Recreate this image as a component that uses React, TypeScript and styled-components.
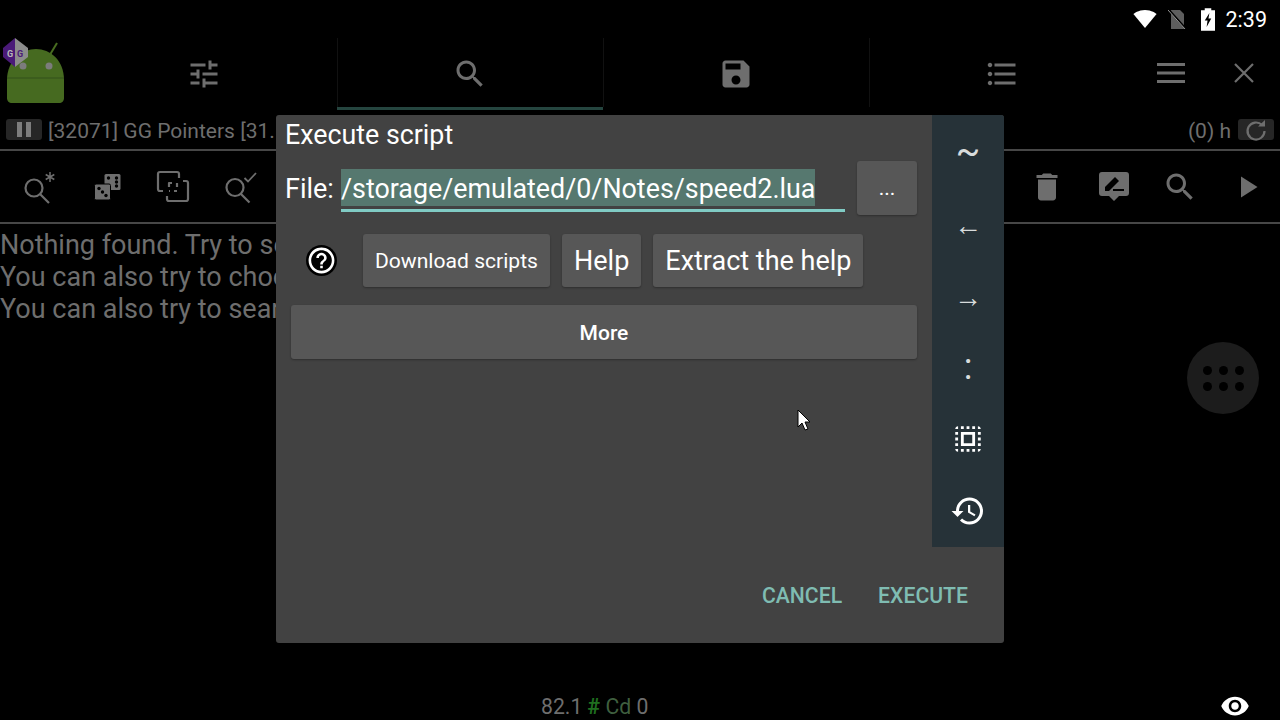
import React from 'react';
import styled, { createGlobalStyle } from 'styled-components';

const GlobalStyle = createGlobalStyle`
  html, body {
    background: #000;
    margin: 0;
    overflow: hidden;
    padding: 0;
  }
  * {
    box-sizing: border-box;
  }
`;

const Screen = styled.div`
  background: #000;
  color: #6e6e6e;
  display: flex;
  flex-direction: column;
  font-family: Roboto, "Liberation Sans", sans-serif;
  height: 720px;
  overflow: hidden;
  position: relative;
  width: 1280px;
`;

const StatusBar = styled.div`
  align-items: center;
  color: #fff;
  display: flex;
  font-size: 21.5px;
  height: 38px;
  justify-content: flex-end;
  padding-right: 13px;
`;
const StatusIcon = styled.svg<{ $gap: number }>`
  display: block;
  margin-right: ${(p) => p.$gap}px;
`;

const TabBar = styled.div`
  display: flex;
  height: 72px;
`;
const LogoCell = styled.div`
  width: 71px;
`;
const Tab = styled.div<{ $active?: boolean }>`
  align-items: center;
  border-bottom: 3px solid ${(p) => (p.$active ? '#25453f' : 'transparent')};
  display: flex;
  justify-content: center;
  padding-top: 2px;
  width: 266px;

  & + & {
    box-shadow: inset 1px 0 0 #111;
  }
`;
const TabAction = styled.div`
  align-items: center;
  display: flex;
  flex: 1;
  justify-content: center;
  padding-bottom: 2px;
`;

const ProcessRow = styled.div`
  align-items: center;
  border-bottom: 2px solid #474747;
  display: flex;
  font-size: 21px;
  height: 41px;
  justify-content: space-between;
  padding: 0 6px;
`;
const ProcessName = styled.div`
  align-items: center;
  display: flex;
  gap: 6px;
`;
const ProcessState = styled.div`
  align-items: center;
  display: flex;
  gap: 7px;
`;
const RowLabel = styled.span`
  padding-top: 3px;
`;
const SmallKey = styled.div`
  align-items: center;
  background: #262626;
  border-radius: 3px;
  display: flex;
  height: 21px;
  justify-content: center;
  width: 36px;
`;
const PauseBar = styled.span`
  background: #7d7d7d;
  display: block;
  height: 15px;
  margin: 0 2px;
  width: 5px;
`;

const ToolRow = styled.div`
  border-bottom: 2px solid #474747;
  display: flex;
  height: 73px;
  justify-content: space-between;
  padding-left: 7px;
`;
const ToolGroup = styled.div`
  display: flex;
`;
const ToolCell = styled.div`
  align-items: center;
  display: flex;
  justify-content: center;
  width: 66.5px;
`;

const Messages = styled.div`
  flex: 1;
  font-size: 27px;
  line-height: 32px;
  padding-top: 5px;
  white-space: nowrap;
`;

const BottomBar = styled.div`
  align-items: center;
  display: flex;
  font-size: 21.2px;
  height: 28px;
  justify-content: space-between;
  padding: 0 30px 0 541px;
`;
const BottomStats = styled.span`
  padding-top: 1px;
`;
const Hash = styled.span`
  color: #1f6e1f;
  font-weight: 700;
`;
const Cd = styled.span`
  color: #3f5f3f;
`;

const Fab = styled.div`
  align-content: center;
  background: #1c1c1c;
  border-radius: 50%;
  display: grid;
  gap: 7px;
  grid-template-columns: repeat(3, 9px);
  height: 72px;
  justify-content: center;
  left: 1187px;
  position: absolute;
  top: 342px;
  width: 72px;
`;
const FabDot = styled.span`
  background: #000;
  border-radius: 50%;
  height: 9px;
  width: 9px;
`;

const Dialog = styled.div`
  background: #424242;
  border-radius: 3px;
  color: #fff;
  display: flex;
  flex-direction: column;
  height: 528px;
  left: 276px;
  overflow: hidden;
  position: absolute;
  top: 115px;
  width: 728px;
`;
const DialogTop = styled.div`
  display: flex;
  height: 432px;
`;
const DialogBody = styled.div`
  flex: 1;
  padding: 0 15px 0 9px;
`;
const Title = styled.div`
  font-size: 26.8px;
  height: 46px;
  line-height: 40px;
`;
const FileRow = styled.div`
  align-items: flex-start;
  display: flex;
  height: 54px;
`;
const FileLabel = styled.span`
  font-size: 27px;
  line-height: 56px;
  width: 56px;
`;
const FileField = styled.div`
  border-bottom: 3px solid #80cbc4;
  height: 51px;
  padding-top: 8px;
  width: 504px;
`;
const FileValue = styled.span`
  background: #56786f;
  display: inline-block;
  font-size: 26.85px;
  height: 37px;
  line-height: 40px;
  white-space: nowrap;
`;
const RaisedButton = styled.div<{ $size?: number; $bold?: boolean }>`
  align-items: center;
  background: #575757;
  border-radius: 3px;
  box-shadow: 0 1px 2px rgba(0, 0, 0, 0.3);
  display: flex;
  font-size: ${(p) => p.$size ?? 27}px;
  font-weight: ${(p) => (p.$bold ? 500 : 400)};
  height: 53px;
  justify-content: center;
  padding: 0 12px;
  white-space: nowrap;
`;
const DotsButton = styled(RaisedButton)`
  height: 54px;
  margin-left: 12px;
  width: 60px;
`;
const ButtonRow = styled.div`
  align-items: center;
  display: flex;
  gap: 12px;
  margin-top: 19px;
`;
const HelpSlot = styled.div`
  align-items: center;
  display: flex;
  justify-content: center;
  margin-left: 6px;
  width: 60px;
`;
const HelpDisc = styled.div`
  background: #000;
  border-radius: 50%;
  height: 31px;
  width: 31px;
`;
const MoreButton = styled(RaisedButton)`
  height: 54px;
  margin-left: 6px;
  margin-top: 18px;
  padding-top: 1px;
`;
const SidePanel = styled.div`
  background: #263238;
  display: grid;
  grid-template-rows: repeat(6, 72px);
  width: 72px;
`;
const SideKey = styled.div<{ $size?: number; $drop?: number }>`
  align-items: center;
  color: #d8dcdc;
  display: flex;
  font-size: ${(p) => p.$size ?? 26}px;
  justify-content: center;
  padding-top: ${(p) => p.$drop ?? 0}px;
`;
const Footer = styled.div`
  align-items: center;
  display: flex;
  flex: 1;
  gap: 36px;
  justify-content: flex-end;
  padding: 0 36px 0 0;
`;
const FooterAction = styled.span`
  color: #7fbcb2;
  font-size: 21.2px;
  font-weight: 500;
`;
const Cursor = styled.svg`
  left: 796px;
  position: absolute;
  top: 409px;
`;

const P = {
  tune: 'M3 17v2h6v-2H3zM3 5v2h10V5H3zm10 16v-2h8v-2h-8v-2h-2v6h2zM7 9v2H3v2h4v2h2V9H7zm14 4v-2H11v2h10zm-6-4h2V7h4V5h-4V3h-2v6z',
  search: 'M15.5 14h-.79l-.28-.27C15.41 12.59 16 11.11 16 9.5 16 5.91 13.09 3 9.5 3S3 5.91 3 9.5 5.91 16 9.5 16c1.61 0 3.09-.59 4.23-1.57l.27.28v.79l5 4.99L20.49 19l-4.99-5zm-6 0C7.01 14 5 11.99 5 9.5S7.01 5 9.5 5 14 7.01 14 9.5 11.99 14 9.5 14z',
  save: 'M17 3H5c-1.11 0-2 .9-2 2v14c0 1.1.89 2 2 2h14c1.1 0 2-.9 2-2V7l-4-4zm-5 16c-1.66 0-3-1.34-3-3s1.34-3 3-3 3 1.34 3 3-1.34 3-3 3zm3-10H5V5h10v4z',
  list: 'M4 10.5c-.83 0-1.5.67-1.5 1.5s.67 1.5 1.5 1.5 1.5-.67 1.5-1.5-.67-1.5-1.5-1.5zm0-6c-.83 0-1.5.67-1.5 1.5S3.17 7.5 4 7.5 5.5 6.83 5.5 6 4.83 4.5 4 4.5zm0 12c-.83 0-1.5.68-1.5 1.5s.68 1.5 1.5 1.5 1.5-.68 1.5-1.5-.67-1.5-1.5-1.5zM7 19h14v-2H7v2zm0-6h14v-2H7v2zm0-8v2h14V5H7z',
  trash: 'M6 19c0 1.1.9 2 2 2h8c1.1 0 2-.9 2-2V7H6v12zM19 4h-3.5l-1-1h-5l-1 1H5v2h14V4z',
  play: 'M8 5v14l11-7z',
  eye: 'M12 4.5C7 4.5 2.73 7.61 1 12c1.73 4.39 6 7.5 11 7.5s9.27-3.11 11-7.5c-1.73-4.39-6-7.5-11-7.5zM12 17c-2.76 0-5-2.24-5-5s2.24-5 5-5 5 2.24 5 5-2.24 5-5 5zm0-8c-1.66 0-3 1.34-3 3s1.34 3 3 3 3-1.34 3-3-1.34-3-3-3z',
  history: 'M13 3c-4.97 0-9 4.03-9 9H1l3.89 3.89.07.14L9 12H6c0-3.87 3.13-7 7-7s7 3.13 7 7-3.13 7-7 7c-1.93 0-3.68-.79-4.94-2.06l-1.42 1.42C8.27 19.99 10.51 21 13 21c4.97 0 9-4.03 9-9s-4.03-9-9-9zm-1 5v5l4.28 2.54.72-1.21-3.5-2.08V8H12z',
  selectAll: 'M3 5h2V3c-1.1 0-2 .9-2 2zm0 8h2v-2H3v2zm4 8h2v-2H7v2zM3 9h2V7H3v2zm10-6h-2v2h2V3zm6 0v2h2c0-1.1-.9-2-2-2zM5 21v-2H3c0 1.1.9 2 2 2zm-2-4h2v-2H3v2zM9 3H7v2h2V3zm2 18h2v-2h-2v2zm8-8h2v-2h-2v2zm0 8c1.1 0 2-.9 2-2h-2v2zm0-12h2V7h-2v2zm0 8h2v-2h-2v2zm-4 4h2v-2h-2v2zm0-16h2V3h-2v2zM7 17h10V7H7v10zm2-8h6v6H9V9z',
  help: 'M11 18h2v-2h-2v2zm1-16C6.48 2 2 6.48 2 12s4.48 10 10 10 10-4.48 10-10S17.52 2 12 2zm0 18c-4.41 0-8-3.59-8-8s3.59-8 8-8 8 3.59 8 8-3.59 8-8 8zm0-14c-2.21 0-4 1.79-4 4h2c0-1.1.9-2 2-2s2 .9 2 2c0 2-3 1.75-3 5h2c0-2.25 3-2.5 3-5 0-2.21-1.79-4-4-4z',
};

function Icon({ d, size = 36, color = '#6e6e6e' }: { d: string; size?: number; color?: string }) {
  return (
    <svg width={size} height={size} viewBox="0 0 24 24" fill={color} style={{ display: 'block' }}>
      <path d={d} />
    </svg>
  );
}

function AppLogo() {
  return (
    <svg width="71" height="72" viewBox="0 0 71 72" style={{ display: 'block' }}>
      <path d="M48 20 L57 5" stroke="#486c20" strokeWidth="2" />
      <path d="M7 60 V42 C7 22 22 11 36 11 C50 11 64 22 64 42 V60 C64 63 62 65 59 65 H12 C9 65 7 63 7 60 Z" fill="#466a20" />
      <path d="M7 40 H64" stroke="#33501a" strokeWidth="1" />
      <circle cx="23" cy="28" r="3.500" fill="#7c7c7c" />
      <circle cx="49" cy="28" r="3.500" fill="#7c7c7c" />
      <path d="M15 0 L3 10 L3 19 L15 29 Z" fill="#4a1a78" />
      <path d="M15 0 L28 10 L28 19 L15 29 Z" fill="#8c8c8c" />
      <text x="7" y="19" fontSize="9" fontWeight="700" fill="#b9b9b9" fontFamily="Roboto, sans-serif">G</text>
      <text x="17" y="19" fontSize="9" fontWeight="700" fill="#4a1a78" fontFamily="Roboto, sans-serif">G</text>
    </svg>
  );
}

function MenuIcon() {
  return (
    <svg width="28" height="20" viewBox="0 0 28 20" fill="#6e6e6e" style={{ display: 'block' }}>
      <rect y="0" width="28" height="3" />
      <rect y="8.500" width="28" height="3" />
      <rect y="17" width="28" height="3" />
    </svg>
  );
}

function CloseIcon() {
  return (
    <svg width="20" height="20" viewBox="0 0 20 20" style={{ display: 'block' }}>
      <path d="M1 1 L19 19 M19 1 L1 19" stroke="#6e6e6e" strokeWidth="2.200" />
    </svg>
  );
}

function SearchStar() {
  return (
    <svg width="36" height="36" viewBox="0 0 36 36" fill="none" stroke="#6e6e6e" strokeWidth="2.200">
      <circle cx="12" cy="19" r="8.500" />
      <path d="M18 25 L27 34" />
      <path d="M28 3 V13 M23.700 5.500 L32.300 10.500 M32.300 5.500 L23.700 10.500" strokeWidth="1.500" />
    </svg>
  );
}

function SearchCheck() {
  return (
    <svg width="36" height="36" viewBox="0 0 36 36" fill="none" stroke="#6e6e6e" strokeWidth="2.200">
      <circle cx="13" cy="18.500" r="8.500" />
      <path d="M19 25 L27.500 33.500" />
      <path d="M22.500 9 L26 12.500 L34 4" strokeWidth="1.800" />
    </svg>
  );
}

function Dice() {
  return (
    <svg width="36" height="36" viewBox="0 0 36 36">
      <rect x="15.500" y="5" width="16" height="16" rx="1.500" fill="#6e6e6e" />
      <rect x="5.500" y="15" width="16" height="16" rx="1.500" fill="#6e6e6e" stroke="#000" strokeWidth="1" />
      <g fill="#000">
        <circle cx="10" cy="19.500" r="1.700" />
        <circle cx="13.500" cy="23" r="1.700" />
        <circle cx="17" cy="26.500" r="1.700" />
        <circle cx="19.500" cy="9" r="1.700" />
        <circle cx="27.500" cy="9" r="1.700" />
        <circle cx="27.500" cy="13" r="1.700" />
        <circle cx="27.500" cy="17" r="1.700" />
      </g>
    </svg>
  );
}

function FocusFrame() {
  return (
    <svg width="36" height="36" viewBox="0 0 36 36" fill="none" stroke="#6e6e6e" strokeWidth="2.200" strokeLinejoin="round">
      <path d="M8 22 H5 C3.500 22 3 21 3 20 V5 C3 3.500 4 3 5 3 H22 C23 3 24 4 24 5 V9" />
      <path d="M28 12 H31 C32.500 12 33 13 33 14 V30 C33 31.500 32 32 31 32 H14 C13 32 12 31 12 30 V27" />
      <path d="M14 18 V14 H17 M22 14 V18 M22 22 H19 M14 22 H15" strokeWidth="2.200" />
    </svg>
  );
}

function EditBubble() {
  return (
    <svg width="30" height="29" viewBox="0 0 30 29" style={{ display: 'block' }}>
      <path d="M3 0 H27 C29 0 30 1 30 3 V21 C30 23 29 24 27 24 H20 L15 29 L10 24 H3 C1 24 0 23 0 21 V3 C0 1 1 0 3 0 Z" fill="#6e6e6e" />
      <path d="M6 19 V15 L16 5 L20 9 L10 19 Z" fill="#000" />
      <path d="M14 17 H25 V19 H14 Z" fill="#000" />
    </svg>
  );
}

function RefreshIcon() {
  return (
    <svg width="24" height="24" viewBox="0 0 24 24" fill="none" stroke="#6e6e6e" strokeWidth="2.200">
      <path d="M18 7 A8.500 8.500 0 1 0 20.500 13" />
      <path d="M14 8.500 H21 V2 Z" fill="#6e6e6e" stroke="none" />
    </svg>
  );
}

export default function App() {
  return (
    <Screen>
      <GlobalStyle />
      <StatusBar>
        <StatusIcon $gap={10} width="26" height="20" viewBox="0 0 24 20">
          <path d="M12 19 L23.600 5 C23 4.500 18.700 1 12 1 C5.300 1 1 4.500 0.400 5 Z" fill="#fff" />
        </StatusIcon>
        <StatusIcon $gap={14} width="19" height="21" viewBox="0 0 19 21">
          <path d="M3 1 H12 L16 5 V20 H3 Z" fill="#5e5e5e" />
          <path d="M1 1 L18 20" stroke="#000" strokeWidth="2" />
          <path d="M0 1 L17 20" stroke="#bdbdbd" strokeWidth="0.800" />
        </StatusIcon>
        <StatusIcon $gap={11} width="14" height="23" viewBox="0 0 15 24">
          <path d="M4 0 H11 V2 H15 V24 H0 V2 H4 Z" fill="#fff" />
          <path d="M9 5 L4 13 H7 L6 20 L11 11 H8 Z" fill="#000" />
        </StatusIcon>
        <span>2:39</span>
      </StatusBar>

      <TabBar>
        <LogoCell>
          <AppLogo />
        </LogoCell>
        <Tab><Icon d={P.tune} /></Tab>
        <Tab $active><Icon d={P.search} /></Tab>
        <Tab><Icon d={P.save} /></Tab>
        <Tab><Icon d={P.list} /></Tab>
        <TabAction><MenuIcon /></TabAction>
        <TabAction><CloseIcon /></TabAction>
      </TabBar>

      <ProcessRow>
        <ProcessName>
          <SmallKey><PauseBar /><PauseBar /></SmallKey>
          <RowLabel>[32071] GG Pointers [31.</RowLabel>
        </ProcessName>
        <ProcessState>
          <RowLabel>(0) h</RowLabel>
          <SmallKey><RefreshIcon /></SmallKey>
        </ProcessState>
      </ProcessRow>

      <ToolRow>
        <ToolGroup>
          <ToolCell><SearchStar /></ToolCell>
          <ToolCell><Dice /></ToolCell>
          <ToolCell><FocusFrame /></ToolCell>
          <ToolCell><SearchCheck /></ToolCell>
        </ToolGroup>
        <ToolGroup>
          <ToolCell><Icon d={P.trash} /></ToolCell>
          <ToolCell><EditBubble /></ToolCell>
          <ToolCell><Icon d={P.search} /></ToolCell>
          <ToolCell><Icon d={P.play} /></ToolCell>
        </ToolGroup>
      </ToolRow>

      <Messages>
        <div>Nothing found. Try to se</div>
        <div>You can also try to choo</div>
        <div>You can also try to sear</div>
      </Messages>

      <BottomBar>
        <BottomStats>82.1 <Hash>#</Hash> <Cd>Cd</Cd> 0</BottomStats>
        <Icon d={P.eye} size={30} color="#fff" />
      </BottomBar>

      <Fab>
        {[0, 1, 2, 3, 4, 5].map((i) => <FabDot key={i} />)}
      </Fab>

      <Dialog>
        <DialogTop>
          <DialogBody>
            <Title>Execute script</Title>
            <FileRow>
              <FileLabel>File:</FileLabel>
              <FileField>
                <FileValue>/storage/emulated/0/Notes/speed2.lua</FileValue>
              </FileField>
              <DotsButton $size={21}>...</DotsButton>
            </FileRow>
            <ButtonRow>
              <HelpSlot>
                <HelpDisc><Icon d={P.help} size={31} color="#fff" /></HelpDisc>
              </HelpSlot>
              <RaisedButton $size={21.1}>Download scripts</RaisedButton>
              <RaisedButton>Help</RaisedButton>
              <RaisedButton>Extract the help</RaisedButton>
            </ButtonRow>
            <MoreButton $size={21} $bold>More</MoreButton>
          </DialogBody>
          <SidePanel>
            <SideKey $size={36}>~</SideKey>
            <SideKey $size={28} $drop={4}>←</SideKey>
            <SideKey $size={28} $drop={4}>→</SideKey>
            <SideKey $size={36}>:</SideKey>
            <SideKey><Icon d={P.selectAll} size={34} color="#fff" /></SideKey>
            <SideKey><Icon d={P.history} size={36} color="#fff" /></SideKey>
          </SidePanel>
        </DialogTop>
        <Footer>
          <FooterAction>CANCEL</FooterAction>
          <FooterAction>EXECUTE</FooterAction>
        </Footer>
      </Dialog>

      <Cursor width="14" height="24" viewBox="0 0 14 24">
        <path d="M2 1 V18 L6 14 L9 21 L12 20 L9 13 L14 13 Z" fill="#fff" stroke="#000" strokeWidth="1" />
      </Cursor>
    </Screen>
  );
}
